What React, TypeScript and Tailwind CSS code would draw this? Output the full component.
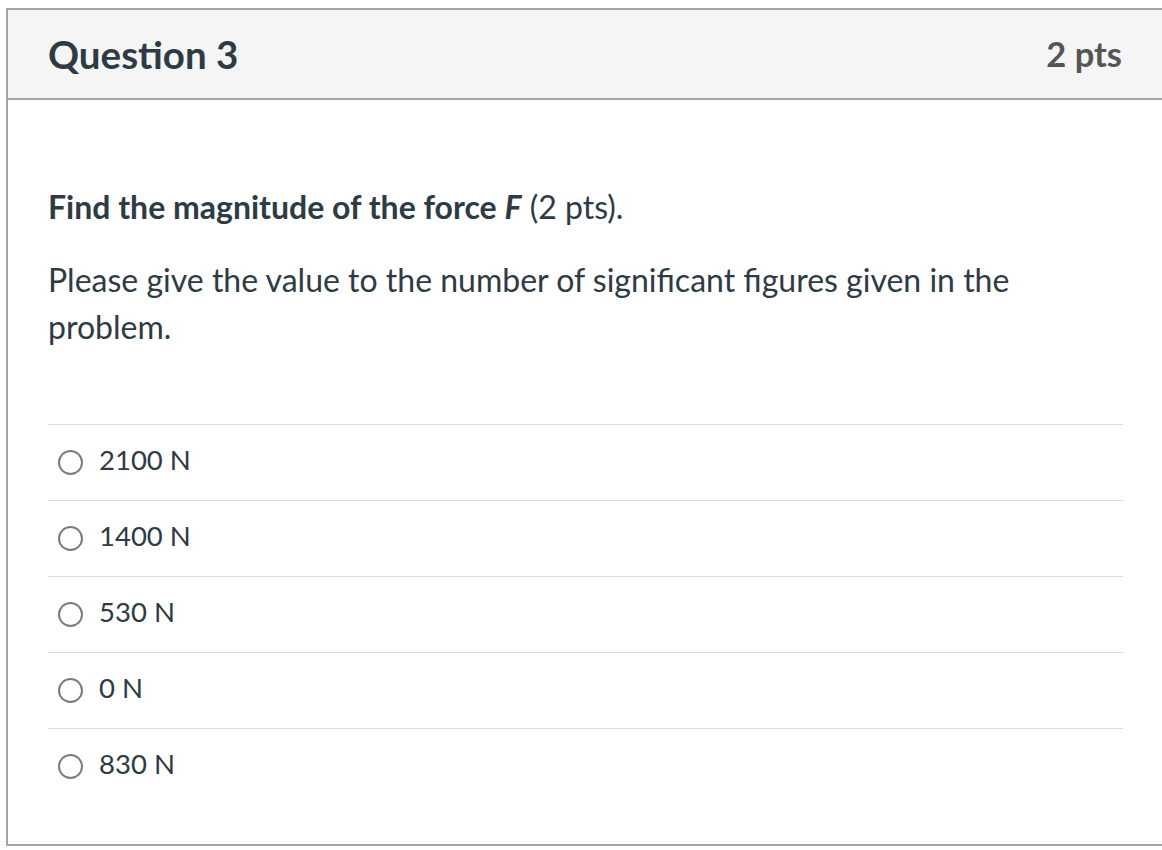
import React from "react";

const answers = ["2100 N", "1400 N", "530 N", "0 N", "830 N"];

export default function App() {
  return (
    <div
      className="w-[1162px] h-[850px] bg-white overflow-hidden pt-[8px] pl-[6px]"
      style={{ fontFamily: "Lato, 'Open Sans', sans-serif" }}
    >
      <div className="w-[1200px] border-2 border-[#a5a5a5] bg-white">
        <div className="h-[90px] bg-[#f5f5f5] border-b-2 border-[#a5a5a5] pl-[40px] pr-[82px] flex items-center justify-between">
          <h2 className="text-[38.5px] font-bold text-[#2d3b45] leading-none">Question 3</h2>
          <div className="text-[34.5px] font-bold text-[#555555] leading-none">2 pts</div>
        </div>
        <div className="pl-[40px] pr-[81px] pt-[83px] pb-[40px]">
          <div className="text-[32px] leading-[47px] text-[#2d3b45]">
            <p>
              <strong>Find the magnitude of the force <em>F</em></strong> (2 pts).
            </p>
            <p className="mt-[26px]">
              Please give the value to the number of significant figures given in the
              <br />
              problem.
            </p>
          </div>
          <div className="mt-[74px]">
            {answers.map((a) => (
              <div
                key={a}
                className="h-[76px] border-t border-[#dcdcdc] flex items-center"
              >
                <span className="ml-[10px] w-[25px] h-[25px] rounded-full border-2 border-[#7a7a7a] bg-white shrink-0" />
                <span className="ml-[16px] mb-[6px] text-[27.5px] text-[#2d3b45] leading-none">{a}</span>
              </div>
            ))}
          </div>
        </div>
      </div>
    </div>
  );
}
